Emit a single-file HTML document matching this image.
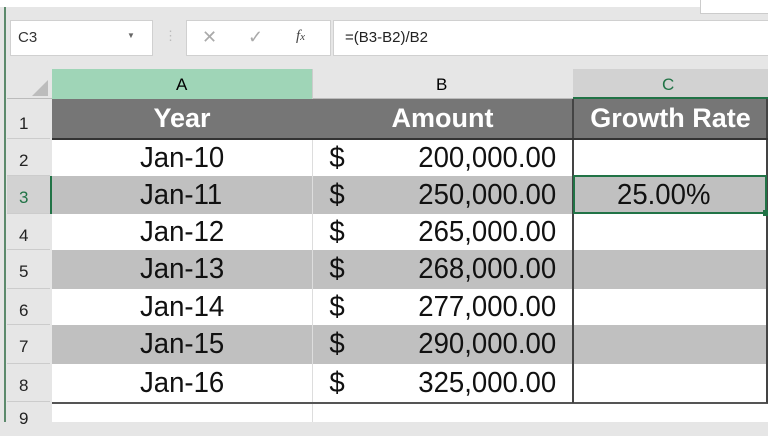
<!DOCTYPE html>
<html><head><style>
*{margin:0;padding:0;box-sizing:border-box}
body{width:768px;height:422px;overflow:hidden;background:#e6e6e6;font-family:"Liberation Sans",sans-serif;position:relative}
.a{position:absolute}
.t{position:absolute;white-space:nowrap}
.r{position:relative;font-size:29px;color:#111}
.r span{position:absolute;top:0;white-space:nowrap;transform:scaleX(0.95)}
.y{left:88px;transform-origin:left}
.d{left:277px}
.n{right:212px;transform-origin:right}
</style></head><body>
<div class="a" style="left:0;top:0;width:768px;height:7px;background:#fff"></div>
<div class="a" style="left:700px;top:0;width:68px;height:14px;background:#fff;border-left:1px solid #ccc;border-bottom:1px solid #ccc"></div>
<div class="a" style="left:4px;top:7px;width:2px;height:415px;background:#5c8a6c"></div>
<div class="a" style="left:10px;top:20px;width:143px;height:36px;background:#fff;border:1px solid #d0d0d0"></div>
<div class="t" style="left:18px;top:29px;font-size:15px;color:#333">C3</div>
<div class="t" style="left:127px;top:31px;font-size:8px;color:#666">▼</div>
<div class="t" style="left:164px;top:28px;font-size:13px;color:#bbb">⋮</div>
<div class="a" style="left:186px;top:20px;width:145px;height:36px;background:#fff;border:1px solid #d0d0d0"></div>
<div class="t" style="left:202px;top:27px;font-size:18px;color:#aaa">✕</div>
<div class="t" style="left:248px;top:27px;font-size:18px;color:#aaa">✓</div>
<div class="t" style="left:296px;top:28px;font-size:15px;color:#444;font-style:italic;font-family:'Liberation Serif',serif">f<span style="font-size:11px">x</span></div>
<div class="a" style="left:333px;top:20px;width:440px;height:36px;background:#fff;border:1px solid #d0d0d0"></div>
<div class="t" style="left:345px;top:29px;font-size:15px;color:#222">=(B3-B2)/B2</div>
<div class="a" style="left:7px;top:69px;width:761px;height:30px;background:#e6e6e6;border-bottom:1px solid #bbb"></div>
<div class="a" style="left:52px;top:69px;width:260px;height:30px;background:#9fd5b7"></div>
<div class="a" style="left:573px;top:69px;width:195px;height:30px;background:#d2d2d2;border-bottom:2px solid #217346"></div>
<svg class="a" style="left:30px;top:78px" width="20" height="20"><polygon points="18,2 18,18 2,18" fill="#bcbcbc"/></svg>
<div class="t" style="left:176px;top:75px;font-size:17px">A</div>
<div class="t" style="left:436px;top:75px;font-size:17px">B</div>
<div class="t" style="left:662px;top:75px;font-size:17px;color:#217346">C</div>
<div class="a" style="left:312px;top:69px;width:1px;height:30px;background:#ccc"></div>
<div class="a" style="left:52px;top:99px;width:716px;height:323px;background:#fff"></div>
<div class="a" style="left:52px;top:99px;width:716px;height:40px;background:#767676"></div>
<div class="a" style="left:52px;top:176px;width:716px;height:38px;background:#c0c0c0"></div>
<div class="a" style="left:52px;top:250px;width:716px;height:39px;background:#c0c0c0"></div>
<div class="a" style="left:52px;top:325px;width:716px;height:39px;background:#c0c0c0"></div>
<div class="a" style="left:312px;top:139px;width:1px;height:283px;background:#ddd"></div>
<div class="a" style="left:52px;top:402px;width:716px;height:2px;background:#555"></div>
<div class="a" style="left:572px;top:99px;width:2px;height:304px;background:#444"></div>
<div class="a" style="left:766px;top:99px;width:2px;height:304px;background:#444"></div>
<div class="a" style="left:52px;top:138px;width:716px;height:2px;background:#333"></div>
<div class="a" style="left:573px;top:175px;width:194px;height:39px;border:2px solid #217346"></div>
<div class="a" style="left:763px;top:210px;width:6px;height:6px;background:#217346"></div>
<div class="a" style="left:7px;top:99px;width:45px;height:323px;background:#e6e6e6"></div>
<div class="a" style="left:50px;top:176px;width:2px;height:38px;background:#217346"></div>
<div style="position:absolute;left:7px;top:99px;width:43px;font-size:17px;color:#222">
<div style="height:40px;line-height:50px;padding-left:12px;border-bottom:1px solid #ccc">1</div>
<div style="height:37px;line-height:44px;padding-left:12px;border-bottom:1px solid #ccc">2</div>
<div style="height:38px;line-height:44px;padding-left:12px;border-bottom:1px solid #ccc;color:#217346;background:#d2d2d2">3</div>
<div style="height:36px;line-height:44px;padding-left:12px;border-bottom:1px solid #ccc">4</div>
<div style="height:39px;line-height:44px;padding-left:12px;border-bottom:1px solid #ccc">5</div>
<div style="height:36px;line-height:44px;padding-left:12px;border-bottom:1px solid #ccc">6</div>
<div style="height:39px;line-height:44px;padding-left:12px;border-bottom:1px solid #ccc">7</div>
<div style="height:38px;line-height:44px;padding-left:12px;border-bottom:1px solid #ccc">8</div>
<div style="height:20px;line-height:34px;padding-left:12px">9</div>
</div>
<div class="t" style="left:52px;top:103px;width:260px;text-align:center;font-size:27px;font-weight:bold;color:#fff">Year</div>
<div class="t" style="left:312px;top:103px;width:261px;text-align:center;font-size:27px;font-weight:bold;color:#fff">Amount</div>
<div class="t" style="left:573px;top:103px;width:195px;text-align:center;font-size:27px;font-weight:bold;color:#fff">Growth Rate</div>
<div style="position:absolute;left:52px;top:140px;width:716px">
<div class="r" style="height:36px;line-height:36px"><span class="y">Jan-10</span><span class="d">$</span><span class="n">200,000.00</span></div>
<div class="r" style="height:38px;line-height:38px"><span class="y">Jan-11</span><span class="d">$</span><span class="n">250,000.00</span><span style="left:565px;transform-origin:left">25.00%</span></div>
<div class="r" style="height:36px;line-height:36px"><span class="y">Jan-12</span><span class="d">$</span><span class="n">265,000.00</span></div>
<div class="r" style="height:39px;line-height:39px"><span class="y">Jan-13</span><span class="d">$</span><span class="n">268,000.00</span></div>
<div class="r" style="height:36px;line-height:36px"><span class="y">Jan-14</span><span class="d">$</span><span class="n">277,000.00</span></div>
<div class="r" style="height:39px;line-height:39px"><span class="y">Jan-15</span><span class="d">$</span><span class="n">290,000.00</span></div>
<div class="r" style="height:38px;line-height:38px"><span class="y">Jan-16</span><span class="d">$</span><span class="n">325,000.00</span></div>
</div>
</body></html>
